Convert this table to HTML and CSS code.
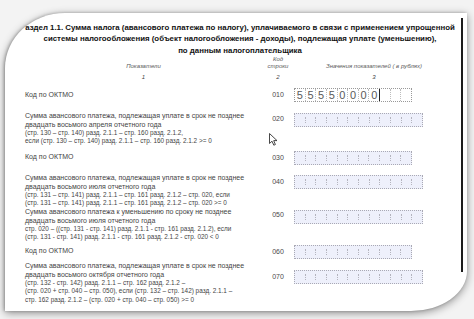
FILE: index.html
```html
<!DOCTYPE html>
<html lang="ru">
<head>
<meta charset="utf-8">
<link rel="stylesheet" href="styles.css">
</head>
<body>
<div class="page">
  <div class="doc">
    <h1 class="title">аздел 1.1. Сумма налога (авансового платежа по налогу), уплачиваемого в связи с применением упрощенной<br>системы налогообложения (объект налогообложения - доходы), подлежащая уплате (уменьшению),<br>по данным налогоплательщика</h1>

    <div class="grid head">
      <div class="h">Показатели</div>
      <div class="h">Код<br>строки</div>
      <div class="h">Значения показателей ( в рублях)</div>
    </div>
    <div class="grid nums">
      <div>1</div><div>2</div><div>3</div>
    </div>

    <div class="grid row row-a">
      <div class="label">Код по ОКТМО</div>
      <div class="code">010</div>
      <div class="box box-11 box-white">
        <span>5</span><span>5</span><span>5</span><span>5</span><span>0</span><span>0</span><span>0</span><span class="caret">0</span><span></span><span></span><span></span>
      </div>
    </div>

    <div class="grid row row-b">
      <div class="label">
        <p class="lead">Сумма авансового платежа, подлежащая уплате в срок не позднее<br>двадцать восьмого апреля отчетного года</p>
        <p class="formula">(стр. 130 – стр. 140) разд. 2.1.1 – стр. 160 разд. 2.1.2,<br>если (стр. 130 – стр. 140) разд. 2.1.1 – стр. 160 разд. 2.1.2 &gt;= 0</p>
      </div>
      <div class="code off-b">020</div>
      <div class="box box-12 boff-b">
        <span></span><span></span><span></span><span></span><span></span><span></span><span></span><span></span><span></span><span></span><span></span><span></span>
      </div>
    </div>

    <div class="grid row row-c">
      <div class="label">Код по ОКТМО</div>
      <div class="code">030</div>
      <div class="box box-11">
        <span></span><span></span><span></span><span></span><span></span><span></span><span></span><span></span><span></span><span></span><span></span>
      </div>
    </div>

    <div class="grid row row-d">
      <div class="label">
        <p class="lead">Сумма авансового платежа, подлежащая уплате в срок не позднее<br>двадцать восьмого июля отчетного года</p>
        <p class="formula">(стр. 131 – стр. 141) разд. 2.1.1 – стр. 161 разд. 2.1.2 – стр. 020, если<br>(стр. 131 – стр. 141) разд. 2.1.1 – стр. 161 разд. 2.1.2 – стр. 020 &gt;= 0</p>
      </div>
      <div class="code off-d">040</div>
      <div class="box box-12 boff-d">
        <span></span><span></span><span></span><span></span><span></span><span></span><span></span><span></span><span></span><span></span><span></span><span></span>
      </div>
    </div>

    <div class="grid row row-e">
      <div class="label">
        <p class="lead">Сумма авансового платежа к уменьшению по сроку не позднее<br>двадцать восьмого июля отчетного года</p>
        <p class="formula">стр. 020 – ((стр. 131 - стр. 141) разд. 2.1.1 - стр. 161 разд. 2.1.2), если<br>(стр. 131 - стр. 141) разд. 2.1.1 - стр. 161 разд. 2.1.2 - стр. 020 &lt; 0</p>
      </div>
      <div class="code off-e">050</div>
      <div class="box box-12 boff-e">
        <span></span><span></span><span></span><span></span><span></span><span></span><span></span><span></span><span></span><span></span><span></span><span></span>
      </div>
    </div>

    <div class="grid row row-f">
      <div class="label">Код по ОКТМО</div>
      <div class="code">060</div>
      <div class="box box-11">
        <span></span><span></span><span></span><span></span><span></span><span></span><span></span><span></span><span></span><span></span><span></span>
      </div>
    </div>

    <div class="grid row row-g">
      <div class="label">
        <p class="lead">Сумма авансового платежа, подлежащая уплате в срок не позднее<br>двадцать восьмого октября отчетного года</p>
        <p class="formula">(стр. 132 - стр. 142) разд. 2.1.1 – стр. 162 разд. 2.1.2 –<br>(стр. 020 + стр. 040 – стр. 050), если (стр. 132 – стр. 142) разд. 2.1.1 –<br>стр. 162 разд. 2.1.2 – (стр. 020 + стр. 040 – стр. 050) &gt;= 0</p>
      </div>
      <div class="code off-g">070</div>
      <div class="box box-12 boff-g">
        <span></span><span></span><span></span><span></span><span></span><span></span><span></span><span></span><span></span><span></span><span></span><span></span>
      </div>
    </div>

    <svg class="pointer" width="9" height="13" viewBox="0 0 9 13" aria-hidden="true">
      <path d="M0.5 0.5 L0.5 10.5 L3 8.2 L4.8 12.2 L6.4 11.5 L4.7 7.6 L8 7.6 Z" fill="#fff" stroke="#333" stroke-width="0.9" stroke-linejoin="round"/>
    </svg>
  </div>
  <div class="edge"></div>
</div>
</body>
</html>
```

FILE: styles.css
```css
* { box-sizing: border-box; }

html, body {
  margin: 0;
  padding: 0;
}

body {
  width: 474px;
  height: 319px;
  overflow: hidden;
  background: #f3f3f3;
  font-family: "Liberation Sans", Arial, sans-serif;
  color: #3a3a3a;
  padding: 13px 0 0 5px;
}

.page {
  width: 462px;
  height: 298px;
  background: #fff;
  border-radius: 60px 0 56px 0 / 55px 0 40px 0;
  box-shadow: 0 2px 8px rgba(0, 0, 0, 0.42), -1px 0 3px rgba(0, 0, 0, 0.25);
  display: flex;
}

.doc {
  flex: 1;
  position: relative;
}

.edge {
  width: 2px;
  height: 254px;
  margin: 5px 4px 0 0;
  background: #1c1c1c;
}

.title {
  margin: 0;
  padding: 9px 0 0 14px;
  font-size: 7.85px;
  line-height: 11.3px;
  font-weight: bold;
  color: #111;
  text-align: center;
  white-space: nowrap;
}

.grid {
  display: grid;
  grid-template-columns: 237px 26px 1fr;
  column-gap: 3px;
  margin-left: 20px;
}

.head {
  align-items: end;
  font-style: italic;
  font-size: 6px;
  line-height: 7.5px;
  color: #5a5a5a;
}

.head .h {
  text-align: center;
}

.head .h:last-child {
  width: 160px;
}

.nums {
  margin-top: 2.5px;
  font-style: italic;
  font-size: 6px;
  line-height: 8px;
  color: #444;
}

.nums div {
  text-align: center;
}

.nums div:last-child {
  width: 160px;
}

.row {
  align-items: start;
}

.label {
  font-size: 7px;
  line-height: 8.3px;
  color: #444;
  white-space: nowrap;
}

.label p {
  margin: 0;
}

.formula {
  font-size: 6.4px;
}

.code {
  font-size: 7px;
  line-height: 8px;
  color: #4a4a4a;
  text-align: center;
}

/* single-line rows: centered on their box */
.row-a, .row-c, .row-f {
  align-items: center;
}

.row-a { margin-top: 7px; }
.row-b { margin-top: 10px; }
.row-c { margin-top: 5px; }
.row-d { margin-top: 9.8px; }
.row-e { margin-top: 0.8px; }
.row-f { margin-top: 3px; }
.row-g { margin-top: 3.8px; }

.off-b { padding-top: 2.5px; }
.boff-b { margin-top: 1px; }
.off-d { padding-top: 3.5px; }
.boff-d { margin-top: 1px; }
.off-e { padding-top: 3px; }
.boff-e { margin-top: 2px; }
.off-g { padding-top: 11px; }
.boff-g { margin-top: 8px; }

.box {
  display: flex;
  height: 14px;
  border: 1px dotted #a9a9b4;
  background: #eef0fb;
}

.box-11 { width: 118px; }
.box-12 { width: 129px; }

.box span {
  flex: 1;
  margin: 3px 0;
  border-right: 1px dotted #b4b4be;
}

.box span:last-child {
  border-right: none;
}

.box-white {
  background: #fff;
  border-color: #999;
}

.box-white span {
  margin: 0;
  border-right-color: #bdbdbd;
  font-size: 11px;
  line-height: 12px;
  color: #5a5a5a;
  text-align: center;
}

.box-white span.caret {
  border-right: 1px solid #222;
}

.pointer {
  position: absolute;
  left: 264px;
  top: 120px;
}
```
